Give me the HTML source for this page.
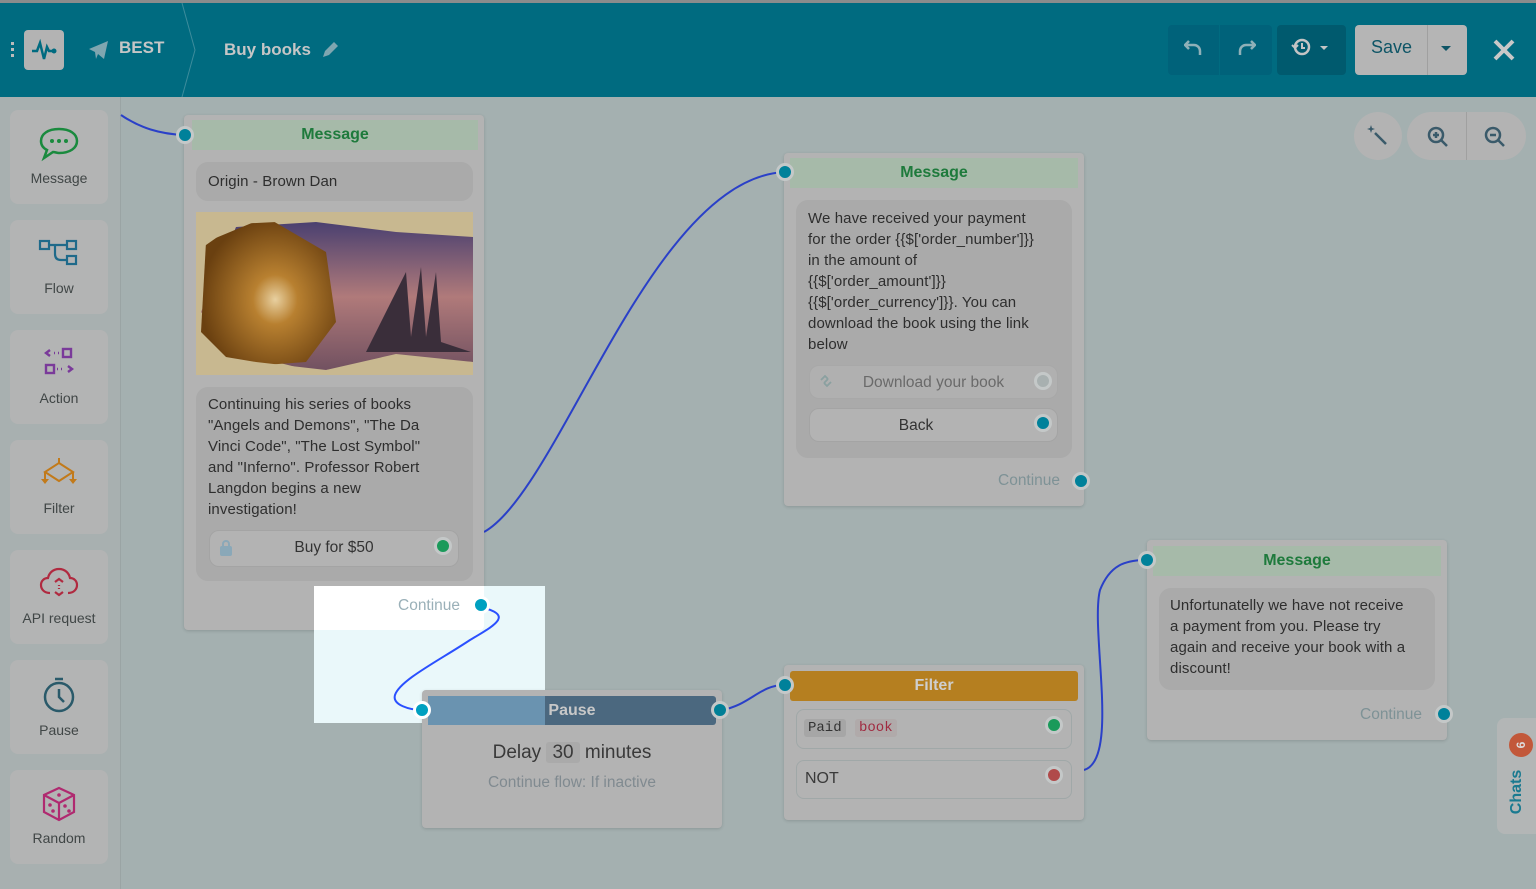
<!DOCTYPE html>
<html><head><meta charset="utf-8"><style>
*{box-sizing:border-box;margin:0;padding:0}
body{width:1536px;height:889px;overflow:hidden;position:relative;background:#a4b0b0;font-family:"Liberation Sans",sans-serif;color:#333}
.a{position:absolute}
.hdr{left:0;top:3px;width:1536px;height:94px;background:#006b80}
.side{left:0;top:97px;width:121px;height:792px;background:#a8b0b0;border-right:1px solid #9aa4a4}
.si{left:10px;width:98px;height:94px;background:#b3b4b4;border-radius:8px;text-align:center;font-size:14px;color:#404646}
.si svg{display:block;margin:16px auto 8px}
.card{background:#b3b3b3;border-radius:4px;box-shadow:0 1px 3px rgba(0,0,0,.15)}
.mh{background:#a6baa9;color:#1e7a3c;font-weight:bold;font-size:16px;text-align:center;line-height:30px}
.box{background:#aaaaaa;border-radius:12px;font-size:15px;line-height:21px;color:#2e2e2e;white-space:nowrap;letter-spacing:.1px}
.dot{width:18px;height:18px;border-radius:50%;border:3px solid #c4c8c8;background:#00819a}
.cont{font-size:15.5px;color:#7e9296}
.btn{background:#b3b3b3;border-radius:10px;border:1px solid #a4a4a4;font-size:15.5px;text-align:center;line-height:33px}
</style></head><body>
<div class="a" style="left:0;top:0;width:1536px;height:3px;background:#8a8c8c"></div>
<div class="a hdr"></div>
<div class="a" style="left:11px;top:42px;width:3px;height:3px;background:#bbb;box-shadow:0 6px 0 #bbb,0 12px 0 #bbb"></div>
<div class="a" style="left:24px;top:30px;width:40px;height:40px;background:#b3b3b3;border-radius:4px"></div>
<svg class="a" style="left:24px;top:30px" width="40" height="40"><path d="M8 21h5l3-8 4 16 3-12 2 4h4" stroke="#006b80" stroke-width="2.5" fill="none"/><circle cx="30" cy="21" r="2.5" fill="#006b80"/></svg>
<svg class="a" style="left:88px;top:40px" width="22" height="20"><path d="M1 9 20 1 16 19 10 14 8 19 7 12Z" fill="#7fa6b0"/></svg>
<div class="a" style="left:119px;top:38px;font-size:17px;font-weight:bold;color:#c6c6c6">BEST</div>
<svg class="a" style="left:180px;top:3px" width="20" height="94"><path d="M2 0 15 47 2 94" stroke="#3d8c9c" fill="none"/></svg>
<div class="a" style="left:224px;top:40px;font-size:17px;font-weight:bold;color:#c6c6c6">Buy books</div>
<svg class="a" style="left:321px;top:41px" width="18" height="18"><path d="M2 16 4 10 13 1 17 5 8 14Z" fill="#7fa6b0"/></svg>
<div class="a" style="left:1168px;top:25px;width:104px;height:50px;background:#00627a;border-radius:4px"></div>
<div class="a" style="left:1219px;top:25px;width:1px;height:50px;background:#006b80"></div>
<svg class="a" style="left:1184px;top:38px" width="20" height="20"><path d="M5 3 1 7 5 11M1 7h9a6 6 0 0 1 6 6v4" stroke="#8fb0b8" stroke-width="2.5" fill="none"/></svg>
<svg class="a" style="left:1236px;top:38px" width="20" height="20"><path d="M15 3 19 7 15 11M19 7h-9a6 6 0 0 0-6 6v4" stroke="#8fb0b8" stroke-width="2.5" fill="none"/></svg>
<div class="a" style="left:1277px;top:25px;width:69px;height:50px;background:#005a6e;border-radius:4px"></div>
<svg class="a" style="left:1291px;top:38px" width="40" height="20"><circle cx="11" cy="9" r="7" stroke="#c4c4c4" stroke-width="2.5" fill="none"/><path d="M11 5v5h3M1 7l3 3 3-3" stroke="#c4c4c4" stroke-width="2" fill="none"/><path d="M29 8h8l-4 4z" fill="#c4c4c4"/></svg>
<div class="a" style="left:1355px;top:25px;width:112px;height:50px;background:#b5b5b5;border-radius:4px"></div>
<div class="a" style="left:1427px;top:25px;width:1px;height:50px;background:#a0a0a0"></div>
<div class="a" style="left:1371px;top:37px;font-size:18px;color:#0e5566">Save</div>
<svg class="a" style="left:1440px;top:44px" width="12" height="8"><path d="M1 2h10l-5 5z" fill="#0e5566"/></svg>
<svg class="a" style="left:1492px;top:38px" width="24" height="24"><path d="M3 3 21 21M21 3 3 21" stroke="#c8c8c8" stroke-width="4"/></svg>

<div class="a side"></div>
<div class="a si" style="top:110px"><svg width="44" height="36" viewBox="0 0 44 36"><path d="M22 3C11 3 4 8 4 15c0 4 2 7 6 9l-3 8 9-6c2 0 4 1 6 1 11 0 18-5 18-12S33 3 22 3Z" stroke="#1a8a3e" stroke-width="2.5" fill="none"/><circle cx="15" cy="15" r="2" fill="#1a8a3e"/><circle cx="22" cy="15" r="2" fill="#1a8a3e"/><circle cx="29" cy="15" r="2" fill="#1a8a3e"/></svg>Message</div>
<div class="a si" style="top:220px"><svg width="44" height="36" viewBox="0 0 44 36"><rect x="3" y="5" width="9" height="8" stroke="#1f6a8a" stroke-width="2.2" fill="none"/><rect x="30" y="5" width="9" height="8" stroke="#1f6a8a" stroke-width="2.2" fill="none"/><rect x="30" y="20" width="9" height="8" stroke="#1f6a8a" stroke-width="2.2" fill="none"/><path d="M12 9h18M18 9v9q0 6 6 6h6" stroke="#1f6a8a" stroke-width="2.2" fill="none"/></svg>Flow</div>
<div class="a si" style="top:330px"><svg width="44" height="36" viewBox="0 0 44 36"><path d="M13 4 9 7l4 3M17 7h1M21 7h1M31 20l4 3-4 3M20 23h1M24 23h1" stroke="#7a3a9a" stroke-width="2.4" fill="none"/><rect x="26" y="3" width="8" height="8" stroke="#7a3a9a" stroke-width="2.4" fill="none"/><rect x="9" y="19" width="8" height="8" stroke="#7a3a9a" stroke-width="2.4" fill="none"/></svg>Action</div>
<div class="a si" style="top:440px"><svg width="52" height="36" viewBox="0 0 52 36"><path d="M26 2v5L12 16l14 9 14-9-14-9M12 16v8M40 16v8" stroke="#c27a1a" stroke-width="2" fill="none"/><path d="M8 23h8l-4 5zM36 23h8l-4 5z" fill="#c27a1a"/></svg>Filter</div>
<div class="a si" style="top:550px"><svg width="44" height="36" viewBox="0 0 44 36"><path d="M13 27c-6 0-9-4-9-8s3-7 7-7c1-5 5-9 11-9s10 4 11 9c4 0 7 3 7 7s-3 8-9 8" stroke="#b02a40" stroke-width="2.2" fill="none"/><path d="M18 16l4-3 4 3M18 26l4 3 4-3M22 19v1M22 22v1" stroke="#b02a40" stroke-width="2.2" fill="none"/></svg>API request</div>
<div class="a si" style="top:660px"><svg width="44" height="38" viewBox="0 0 44 38"><circle cx="22" cy="21" r="14" stroke="#2a5a6a" stroke-width="2.5" fill="none"/><path d="M22 13v8l5 5M18 3h8" stroke="#2a5a6a" stroke-width="2.5" fill="none"/></svg>Pause</div>
<div class="a si" style="top:770px"><svg width="44" height="36" viewBox="0 0 44 36"><path d="M22 2 37 9v17l-15 8-15-8V9Z M7 9l15 8 15-8M22 17v17" stroke="#b02a70" stroke-width="2.2" fill="none"/><circle cx="22" cy="9" r="1.8" fill="#b02a70"/><circle cx="13" cy="19" r="1.8" fill="#b02a70"/><circle cx="16" cy="25" r="1.8" fill="#b02a70"/><circle cx="28" cy="20" r="1.8" fill="#b02a70"/><circle cx="32" cy="25" r="1.8" fill="#b02a70"/></svg>Random</div>

<svg class="a" style="left:0;top:0" width="1536" height="889"><g stroke="#2a40c8" stroke-width="2" fill="none">
<path d="M121 115C140 128 160 134 184 135"/>
<path d="M484 532C560 490 650 180 784 172"/>
<path d="M722 710C750 705 760 685 784 685"/>
<path d="M1084 770C1120 760 1090 630 1100 590C1110 565 1125 560 1147 560"/>
</g></svg>

<div class="a card" style="left:184px;top:115px;width:300px;height:515px"></div>
<div class="a mh" style="left:192px;top:120px;width:286px">Message</div>
<div class="a dot" style="left:176px;top:126px"></div>
<div class="a box" style="left:196px;top:162px;width:277px;height:39px;padding:9px 12px">Origin - Brown Dan</div>
<svg class="a" style="left:196px;top:212px" width="277" height="163"><defs><linearGradient id="sk" x1="0" y1="0" x2="0" y2="1"><stop offset="0" stop-color="#4a4070"/><stop offset=".5" stop-color="#b07a7a"/><stop offset="1" stop-color="#705060"/></linearGradient><radialGradient id="sh" cx=".55" cy=".55" r=".55"><stop offset="0" stop-color="#e8d0a0"/><stop offset=".3" stop-color="#b88030"/><stop offset="1" stop-color="#6a4010"/></radialGradient></defs><rect width="277" height="163" rx="10" fill="#c8b890"/><path d="M40 15 120 10 200 20 277 25V150L200 145 120 160 40 140 5 100Z" fill="url(#sk)"/><path d="M10 30 70 5 130 40 140 110 110 150 40 155 5 120Z" fill="url(#sh)"/><path d="M210 60 215 125 225 55 230 125 240 60 245 130 275 140H170L185 110Z" fill="#3a2e3a"/><path d="M0 0h277v12L200 18 120 8 40 12 0 40Z" fill="#c8b890"/><path d="M0 140 60 150 130 158 200 142 277 150V163H0Z" fill="#c8b890"/></svg>
<div class="a box" style="left:196px;top:387px;width:277px;height:194px;padding:7px 12px">Continuing his series of books<br>"Angels and Demons", "The Da<br>Vinci Code", "The Lost Symbol"<br>and "Inferno". Professor Robert<br>Langdon begins a new<br>investigation!</div>
<div class="a btn" style="left:209px;top:530px;width:250px;height:37px">Buy for $50</div>
<svg class="a" style="left:218px;top:539px" width="16" height="18"><rect x="2" y="7" width="12" height="10" rx="2" fill="#8aa8b8"/><path d="M5 7V5a3 3 0 0 1 6 0v2" stroke="#8aa8b8" stroke-width="2" fill="none"/></svg>
<div class="a dot" style="left:434px;top:537px;background:#1a9a5a"></div>

<div class="a" style="left:314px;top:586px;width:231px;height:137px;background:#eaf8fa"></div>
<div class="a" style="left:314px;top:586px;width:170px;height:44px;background:#fff;border-radius:0 0 4px 0"></div>
<div class="a cont" style="left:398px;top:597px;color:#9ab0b8">Continue</div>
<svg class="a" style="left:380px;top:595px" width="140" height="125"><path d="M100 12C135 20 115 30 90 45C60 65 20 85 15 100C12 110 30 115 42 115" stroke="#2a50ff" stroke-width="2" fill="none"/></svg>
<div class="a dot" style="left:472px;top:596px;background:#00a0c0;border-color:#fff"></div>

<div class="a card" style="left:422px;top:690px;width:300px;height:138px"></div>
<div class="a" style="left:428px;top:696px;width:288px;height:29px;background:#4b687f;border-radius:3px"></div>
<div class="a" style="left:428px;top:696px;width:117px;height:29px;background:#6a93b0"></div>
<div class="a" style="left:428px;top:696px;width:288px;text-align:center;line-height:29px;font-weight:bold;font-size:16px;color:#c8c8c8">Pause</div>
<div class="a dot" style="left:413px;top:701px;background:#00a0c0;border-color:#fff"></div>
<div class="a dot" style="left:711px;top:701px;background:#007f96"></div>
<div class="a" style="left:422px;top:742px;width:300px;text-align:center;font-size:19px;color:#3a3a3a">Delay <span style="background:#aaa;padding:0 6px;border-radius:3px">30</span> minutes</div>
<div class="a" style="left:422px;top:774px;width:300px;text-align:center;font-size:15.5px;color:#808a90">Continue flow: If inactive</div>

<div class="a card" style="left:784px;top:153px;width:300px;height:353px"></div>
<div class="a mh" style="left:790px;top:158px;width:288px">Message</div>
<div class="a dot" style="left:776px;top:163px"></div>
<div class="a box" style="left:796px;top:200px;width:276px;height:258px;padding:8px 12px">We have received your payment<br>for the order {{$['order_number']}}<br>in the amount of<br>{{$['order_amount']}}<br>{{$['order_currency']}}. You can<br>download the book using the link<br>below</div>
<div class="a btn" style="left:809px;top:365px;width:249px;height:34px;color:#6a6a6a;background:#b0b0b0;border-color:#a8a8a8">Download your book</div>
<svg class="a" style="left:818px;top:373px" width="16" height="16"><path d="M3 7 7 3l3 3M13 9l-4 4-3-3M6 10l4-4" stroke="#8aa0a0" stroke-width="1.8" fill="none"/></svg>
<div class="a dot" style="left:1034px;top:372px;background:#a8b0b0"></div>
<div class="a btn" style="left:809px;top:408px;width:249px;height:34px;padding-right:35px">Back</div>
<div class="a dot" style="left:1034px;top:414px"></div>
<div class="a cont" style="left:998px;top:472px">Continue</div>
<div class="a dot" style="left:1072px;top:472px"></div>

<div class="a card" style="left:784px;top:665px;width:300px;height:155px"></div>
<div class="a" style="left:790px;top:671px;width:288px;height:30px;background:#b57f20;border-radius:3px;text-align:center;line-height:30px;font-weight:bold;font-size:16px;color:#cfcfcf">Filter</div>
<div class="a dot" style="left:776px;top:676px"></div>
<div class="a" style="left:796px;top:709px;width:276px;height:40px;border:1px solid #a0a8a8;border-radius:8px"></div>
<div class="a" style="left:804px;top:719px;font-family:'Liberation Mono',monospace;font-size:14px;background:#a6a6a6;padding:1px 4px;border-radius:3px;color:#333">Paid</div>
<div class="a" style="left:855px;top:719px;font-family:'Liberation Mono',monospace;font-size:14px;background:#b0aaaa;padding:1px 4px;border-radius:3px;color:#a02a40">book</div>
<div class="a dot" style="left:1045px;top:716px;background:#1a9a5a"></div>
<div class="a" style="left:796px;top:760px;width:276px;height:39px;border:1px solid #a0a8a8;border-radius:8px;padding:9px 8px;font-size:16px;color:#3a3a3a">NOT</div>
<div class="a dot" style="left:1045px;top:766px;background:#b04a4a"></div>

<div class="a card" style="left:1147px;top:540px;width:300px;height:200px"></div>
<div class="a mh" style="left:1153px;top:546px;width:288px">Message</div>
<div class="a dot" style="left:1138px;top:551px"></div>
<div class="a box" style="left:1159px;top:588px;width:276px;height:102px;padding:7px 11px">Unfortunatelly we have not receive<br>a payment from you. Please try<br>again and receive your book with a<br>discount!</div>
<div class="a cont" style="left:1360px;top:706px">Continue</div>
<div class="a dot" style="left:1435px;top:705px"></div>

<div class="a" style="left:1354px;top:112px;width:48px;height:48px;border-radius:50%;background:#b3b3b3"></div>
<svg class="a" style="left:1366px;top:124px" width="24" height="24"><path d="M9 9 20 20" stroke="#3a5a6a" stroke-width="2.5"/><path d="M5 1l1 3 3 1-3 1-1 3-1-3-3-1 3-1z" fill="#3a5a6a"/></svg>
<div class="a" style="left:1407px;top:112px;width:119px;height:48px;border-radius:24px;background:#b3b3b3"></div>
<div class="a" style="left:1466px;top:112px;width:1px;height:48px;background:#a0a0a0"></div>
<svg class="a" style="left:1426px;top:125px" width="24" height="24"><circle cx="10" cy="10" r="7" stroke="#3a5a6a" stroke-width="2.5" fill="none"/><path d="M15 15l6 6M7 10h6M10 7v6" stroke="#3a5a6a" stroke-width="2.5"/></svg>
<svg class="a" style="left:1483px;top:125px" width="24" height="24"><circle cx="10" cy="10" r="7" stroke="#3a5a6a" stroke-width="2.5" fill="none"/><path d="M15 15l6 6M7 10h6" stroke="#3a5a6a" stroke-width="2.5"/></svg>

<div class="a" style="left:1497px;top:718px;width:45px;height:116px;background:#b3b6b6;border-radius:8px 0 0 8px"></div>
<div class="a" style="left:1509px;top:733px;width:24px;height:24px;border-radius:50%;background:#c2583a;color:#ddd;font-size:12px;font-weight:bold;text-align:center;line-height:24px;transform:rotate(-90deg)">6</div>
<div class="a" style="left:1492px;top:783px;width:50px;text-align:center;transform:rotate(-90deg);font-size:16px;font-weight:bold;color:#1a7a90">Chats</div>
</body></html>
